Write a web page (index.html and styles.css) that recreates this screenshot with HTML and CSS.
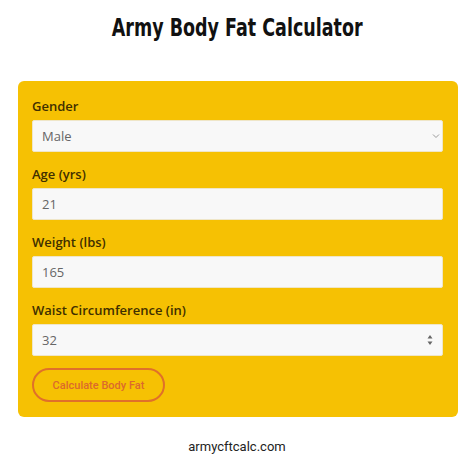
FILE: index.html
```html
<!DOCTYPE html>
<html lang="en">
<head>
    <meta charset="UTF-8">
    <meta name="viewport" content="width=device-width, initial-scale=1.0">
    <title>Army Body Fat Calculator</title>
    <link rel="stylesheet" href="styles.css">
</head>
<body>
    <h1 class="page-title"><span>Army Body Fat Calculator</span></h1>

    <!-- Calculator Form -->
    <form class="calc-card" id="calcForm">
        <div class="form-group">
            <label for="gender">Gender</label>
            <div class="field-wrap">
                <select id="gender" class="field">
                    <option>Male</option>
                    <option>Female</option>
                </select>
                <svg class="field-icon chevron" width="8" height="5" viewBox="0 0 8 5">
                    <path d="M1 1l3 3 3-3" fill="none" stroke="#999" stroke-width="1"/>
                </svg>
            </div>
        </div>

        <div class="form-group">
            <label for="age">Age (yrs)</label>
            <input type="text" id="age" class="field" value="21">
        </div>

        <div class="form-group">
            <label for="weight">Weight (lbs)</label>
            <input type="text" id="weight" class="field" value="165">
        </div>

        <div class="form-group">
            <label for="waist">Waist Circumference (in)</label>
            <div class="field-wrap">
                <input type="text" id="waist" class="field" value="32">
                <svg class="field-icon spinner" width="6" height="11" viewBox="0 0 6 11">
                    <path d="M3 0.5L5.5 4H0.5z M3 10.5L5.5 7H0.5z" fill="#666"/>
                </svg>
            </div>
        </div>

        <button type="button" class="calc-btn">Calculate Body Fat</button>
    </form>

    <footer class="site-footer">armycftcalc.com</footer>
</body>
</html>
```

FILE: styles.css
```css
:root {
    --card: #f6c103;
    --label: #3f2f00;
    --field: #f8f8f8;
    --accent: #e0702a;
}

/* Base Styles */
body {
    margin: 0;
    background: #fff;
    font-family: 'Open Sans', sans-serif;
}

.page-title {
    margin: 0;
    padding: 13px 0 0;
    height: 69px;
    box-sizing: border-box;
    text-align: center;
    font-family: 'DejaVu Sans', sans-serif;
    font-size: 25px;
    line-height: 30px;
    font-weight: bold;
    color: #111;
}

.page-title span {
    display: inline-block;
    transform: scaleX(0.7);
}

/* Calculator Card */
.calc-card {
    margin: 12px 16px 0 18px;
    padding: 16px 15px 15px 14px;
    background: var(--card);
    border-radius: 6px;
}

.form-group {
    display: flex;
    flex-direction: column;
    gap: 5px;
    margin-bottom: 13px;
}

.form-group label {
    font-size: 13px;
    line-height: 18px;
    font-weight: 600;
    color: var(--label);
}

.field-wrap {
    position: relative;
    display: flex;
    flex-direction: column;
}

.field {
    height: 32px;
    box-sizing: border-box;
    padding: 0 9px;
    border: 1px solid #efe6c8;
    border-radius: 2px;
    background: var(--field);
    font-family: 'Open Sans', sans-serif;
    font-size: 13px;
    color: #666;
    outline: none;
}

select.field {
    appearance: none;
    -webkit-appearance: none;
}

.field-icon {
    position: absolute;
    top: 50%;
    transform: translateY(-50%);
    pointer-events: none;
}

.chevron {
    right: 3px;
}

.spinner {
    right: 10px;
}

.calc-btn {
    margin-top: -1px;
    width: 133px;
    height: 34px;
    border: 2px solid var(--accent);
    border-radius: 17px;
    background: transparent;
    font-family: Roboto, sans-serif;
    font-size: 11px;
    font-weight: 500;
    color: #dc6a2c;
    cursor: pointer;
}

.site-footer {
    margin-top: 22px;
    text-align: center;
    font-family: Roboto, sans-serif;
    font-size: 13px;
    color: #222;
}
```
